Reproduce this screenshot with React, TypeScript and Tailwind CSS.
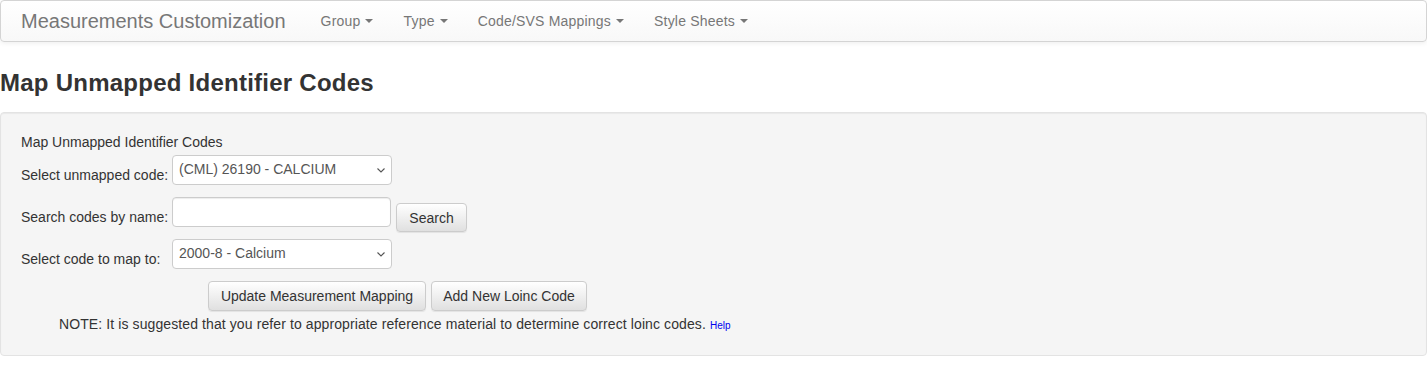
import React from 'react';

const navItems = ['Group', 'Type', 'Code/SVS Mappings', 'Style Sheets'];

function Caret() {
  return (
    <span className="ml-[5px] inline-block h-0 w-0 border-x-[4px] border-t-[4px] border-x-transparent border-t-[#777] align-middle" />
  );
}

function SelectBox({ value }: { value: string }) {
  return (
    <div className="flex h-[30px] w-[220px] items-center justify-between rounded-[4px] border border-[#ccc] bg-white pl-[6px] pr-[5px] text-[14px] text-[#555]">
      <span className="-mt-[2px]">{value}</span>
      <svg width="10" height="10" viewBox="0 0 10 10">
        <path d="M1.5 3.5 L5 7 L8.5 3.5" fill="none" stroke="#555" strokeWidth="1.1" />
      </svg>
    </div>
  );
}

function Btn({ children, className = '' }: { children: React.ReactNode; className?: string }) {
  return (
    <button
      type="button"
      className={`flex h-[29px] items-center justify-center whitespace-nowrap rounded-[4px] border border-[#ccc] bg-gradient-to-b from-white to-[#e0e0e0] px-0 text-[14px] text-[#333] shadow-[inset_0_1px_0_rgba(255,255,255,0.15),0_1px_1px_rgba(0,0,0,0.075)] ${className}`}
    >
      {children}
    </button>
  );
}

export default function App() {
  return (
    <div className="bg-white font-['Liberation_Sans',Arial,sans-serif] text-[14px] leading-[20px] text-[#333]">
      {/* Navbar */}
      <nav className="flex h-[42px] items-center rounded-[4px] border border-[#d4d4d4] bg-gradient-to-b from-white to-[#f8f8f8] shadow-[inset_0_1px_0_rgba(255,255,255,0.15),0_1px_5px_rgba(0,0,0,0.075)]">
        <span className="ml-[20px] text-[20px] text-[#777]">Measurements Customization</span>
        <ul className="ml-[20px] flex">
          {navItems.map((item) => (
            <li key={item} className="flex items-center px-[15px] text-[14px] tracking-[0.2px] text-[#777]">
              {item}
              <Caret />
            </li>
          ))}
        </ul>
      </nav>

      <h1 className="mt-[26px] text-[24px] font-bold leading-[30px] tracking-[0.25px] text-[#333]">Map Unmapped Identifier Codes</h1>

      {/* Well */}
      <div className="mt-[14px] rounded-[4px] border border-[#e3e3e3] bg-[#f5f5f5] px-[19px] pb-[19px] pt-[19px] shadow-[inset_0_1px_1px_rgba(0,0,0,0.05)]">
        <div className="pl-[1px]">Map Unmapped Identifier Codes</div>

        <div className="mt-[3px] flex items-end">
          <label className="w-[152px] pl-[1px]">Select unmapped code:</label>
          <SelectBox value="(CML) 26190 - CALCIUM" />
        </div>

        <div className="mt-[12px] flex h-[30px] items-start">
          <label className="mt-[10px] w-[152px] pl-[1px]">Search codes by name:</label>
          <input className="h-[30px] w-[219px] rounded-[4px] border border-[#ccc] bg-white shadow-[inset_0_1px_1px_rgba(0,0,0,0.075)]" />
          <Btn className="ml-[5px] mt-[6px] w-[71px]">Search</Btn>
        </div>

        <div className="mt-[12px] flex items-end">
          <label className="w-[152px] pl-[1px]">Select code to map to:</label>
          <SelectBox value="2000-8 - Calcium" />
        </div>

        <div className="ml-[188px] mt-[12px] flex">
          <Btn className="h-[30px] w-[218px]">Update Measurement Mapping</Btn>
          <Btn className="ml-[5px] h-[30px] w-[156px]">Add New Loinc Code</Btn>
        </div>

        <div className="ml-[39px] mt-[3px] tracking-[0.1px]">
          NOTE: It is suggested that you refer to appropriate reference material to determine correct loinc codes.{' '}
          <a className="text-[10px] tracking-normal text-[#0000ee]">Help</a>
        </div>
      </div>
    </div>
  );
}
